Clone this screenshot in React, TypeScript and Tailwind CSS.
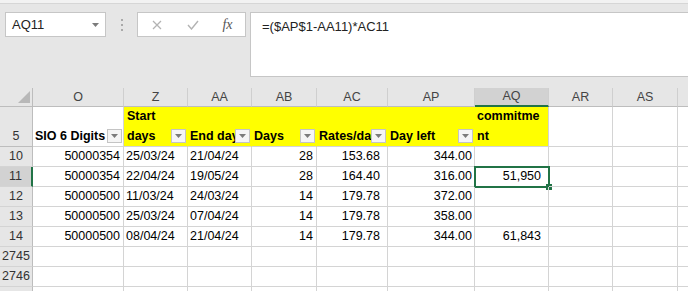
const W = [
  "w-[33px]",
  "w-[91px]",
  "w-[64px]",
  "w-[64px]",
  "w-[65px]",
  "w-[71px]",
  "w-[87px]",
  "w-[74px]",
  "w-[64px]",
  "w-[65px]",
  "w-[40px]",
];

const letters = ["O", "Z", "AA", "AB", "AC", "AP", "AQ", "AR", "AS", ""];

const rows = [
  ["10", "50000354", "25/03/24", "21/04/24", "28", "153.68", "344.00", ""],
  ["11", "50000354", "22/04/24", "19/05/24", "28", "164.40", "316.00", "51,950"],
  ["12", "50000500", "11/03/24", "24/03/24", "14", "179.78", "372.00", ""],
  ["13", "50000500", "25/03/24", "07/04/24", "14", "179.78", "358.00", ""],
  ["14", "50000500", "08/04/24", "21/04/24", "14", "179.78", "344.00", "61,843"],
  ["2745", "", "", "", "", "", "", ""],
  ["2746", "", "", "", "", "", "", ""],
  ["", "", "", "", "", "", "", ""],
];

// text alignment / padding for each data column
const align = [
  "text-right pr-[3px]",
  "text-left pl-[2px]",
  "text-left pl-[2px]",
  "text-right pr-[3px]",
  "text-right pr-[7px]",
  "text-right pr-[2px]",
  "text-right pr-[7px]",
  "",
  "",
  "",
];

function Tri() {
  return (
    <svg width="7" height="4" viewBox="0 0 7 4">
      <path d="M0 0 L7 0 L3.5 4 Z" fill="#7b7b7b" />
    </svg>
  );
}

function FilterBtn() {
  return (
    <div className="absolute right-[1px] bottom-[3px] w-[15px] h-[14px] border border-[#c4c4c4] bg-[#f5f5f5] flex items-center justify-center">
      <Tri />
    </div>
  );
}

function Toolbar() {
  return (
    <div className="h-[84px] bg-[#e6e6e6] flex items-start pt-[8px] pl-[5px] text-[13px] text-[#222]">
      <div className="w-[101px] h-[25px] bg-white border border-[#c6c6c6] flex items-center justify-between pl-[6px] pr-[6px]">
        <span>AQ11</span>
        <Tri />
      </div>
      <div className="w-[31px] h-[25px] flex flex-col items-center justify-center gap-[3px]">
        <div className="w-[2px] h-[2px] bg-[#a9a9a9]" />
        <div className="w-[2px] h-[2px] bg-[#a9a9a9]" />
        <div className="w-[2px] h-[2px] bg-[#a9a9a9]" />
      </div>
      <div className="w-[109px] h-[25px] bg-white border border-[#c6c6c6] flex items-center">
        <div className="w-[37px] flex justify-center">
          <svg width="10" height="10" viewBox="0 0 10 10">
            <path d="M1 1 L9 9 M9 1 L1 9" stroke="#b3b3b3" strokeWidth="1.3" />
          </svg>
        </div>
        <div className="w-[35px] flex justify-center">
          <svg width="12" height="10" viewBox="0 0 12 10">
            <path d="M1 5 L4.5 9 L11 1" stroke="#b3b3b3" strokeWidth="1.4" fill="none" />
          </svg>
        </div>
        <div className="w-[35px] flex justify-center font-['Liberation_Serif',serif] italic text-[14px] text-[#555]">
          fx
        </div>
      </div>
      <div className="ml-[4px] flex-1 h-[65px] bg-white border border-r-0 border-[#c6c6c6] pl-[11px] pt-[4px]">
        =($AP$1-AA11)*AC11
      </div>
    </div>
  );
}

function ColHeaders() {
  return (
    <div className="flex h-[19px] bg-[#e6e6e6] text-[12.5px] text-[#444]">
      <div className={`${W[0]} shrink-0 h-full border-r border-b border-[#bdbdbd] flex items-end justify-end pr-[2px] pb-[3px]`}>
        <svg width="12" height="12" viewBox="0 0 12 12">
          <path d="M12 0 L12 12 L0 12 Z" fill="#b8b8b8" />
        </svg>
      </div>
      {letters.map((l, i) => (
        <div
          key={i}
          className={`${W[i + 1]} shrink-0 h-full border-r border-[#cfcfcf] flex items-center justify-center ${
            l === "AQ" ? "bg-[#d2d2d2] border-b-2 border-b-[#217346]" : "border-b border-b-[#bdbdbd]"
          }`}
        >
          {l}
        </div>
      ))}
    </div>
  );
}

function HeaderRow() {
  const yellow = "bg-[#ffff00] border-r border-r-[#ffff00]";
  return (
    <div className="flex h-[40px] text-[12.5px] font-bold text-black leading-[20px]">
      <div className={`${W[0]} shrink-0 border-r border-b border-[#bdbdbd] bg-[#e6e6e6] font-normal text-[#333] flex items-end justify-center`}>
        5
      </div>
      <div className={`${W[1]} shrink-0 relative border-r border-b border-[#d4d4d4] flex items-end pl-[2px] overflow-hidden whitespace-nowrap`}>
        SIO 6 Digits
        <FilterBtn />
      </div>
      <div className={`${W[2]} shrink-0 relative ${yellow} border-b border-b-[#d4d4d4] flex flex-col justify-end pl-[3px]`}>
        <div>Start</div>
        <div>days</div>
        <FilterBtn />
      </div>
      <div className={`${W[3]} shrink-0 relative ${yellow} border-b border-b-[#d4d4d4] flex items-end pl-[2px] overflow-hidden whitespace-nowrap`}>
        End days
        <FilterBtn />
      </div>
      <div className={`${W[4]} shrink-0 relative ${yellow} border-b border-b-[#d4d4d4] flex items-end pl-[2px] overflow-hidden whitespace-nowrap`}>
        Days
        <FilterBtn />
      </div>
      <div className={`${W[5]} shrink-0 relative ${yellow} border-b border-b-[#d4d4d4] flex items-end pl-[2px] overflow-hidden whitespace-nowrap`}>
        Rates/day
        <FilterBtn />
      </div>
      <div className={`${W[6]} shrink-0 relative ${yellow} border-b border-b-[#d4d4d4] flex items-end pl-[2px] overflow-hidden whitespace-nowrap`}>
        Day left
        <FilterBtn />
      </div>
      <div className={`${W[7]} shrink-0 bg-[#ffff00] border-r border-b border-[#d4d4d4] flex flex-col justify-end pl-[2px]`}>
        <div>commitme</div>
        <div>nt</div>
      </div>
      <div className={`${W[8]} shrink-0 border-r border-b border-[#d4d4d4]`} />
      <div className={`${W[9]} shrink-0 border-r border-b border-[#d4d4d4]`} />
      <div className={`${W[10]} shrink-0 border-r border-b border-[#d4d4d4]`} />
    </div>
  );
}

export default function App() {
  return (
    <div className="w-[688px] h-[291px] overflow-hidden bg-white font-['Liberation_Sans',Arial,sans-serif]">
      <div className="h-[4px] bg-[#f2f2f2] border-b border-[#d6d6d6]" />
      <Toolbar />
      <ColHeaders />
      <HeaderRow />
      {rows.map((r, ri) => (
        <div key={ri} className="flex h-[20px] text-[12.5px] leading-[19px] text-black">
          <div
            className={`${W[0]} shrink-0 border-b border-[#d4d4d4] text-center text-[#333] ${
              r[0] === "11"
                ? "bg-[#d2d2d2] border-r-2 border-r-[#217346]"
                : "bg-[#e6e6e6] border-r border-r-[#bdbdbd]"
            }`}
          >
            {r[0]}
          </div>
          {[1, 2, 3, 4, 5, 6, 7, 8, 9, 10].map((c) => (
            <div
              key={c}
              className={`${W[c]} shrink-0 relative border-r border-b border-[#d4d4d4] whitespace-nowrap ${align[c - 1]}`}
            >
              {c <= 7 ? r[c] : ""}
              {r[0] === "11" && c === 7 && (
                <div className="absolute -left-[1px] -top-[1px] w-[76px] h-[22px] border-2 border-[#217346]">
                  <div className="absolute -right-[4px] -bottom-[4px] w-[6px] h-[6px] bg-[#217346]" />
                </div>
              )}
            </div>
          ))}
        </div>
      ))}
    </div>
  );
}
